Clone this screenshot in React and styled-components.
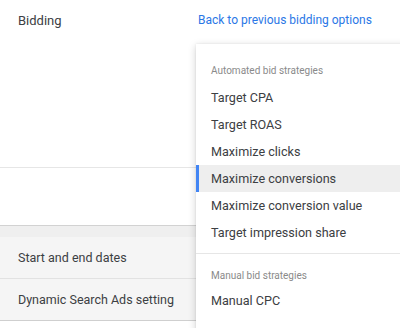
import React from 'react';
import styled, { createGlobalStyle } from 'styled-components';

const automated = [
  'Target CPA',
  'Target ROAS',
  'Maximize clicks',
  'Maximize conversions',
  'Maximize conversion value',
  'Target impression share',
];

const manual = ['Manual CPC'];

const selected = 'Maximize conversions';

const settings = ['Start and end dates', 'Dynamic Search Ads setting'];

function StrategyMenu() {
  return (
    <Menu role="listbox">
      <SectionLabel>Automated bid strategies</SectionLabel>
      {automated.map((name) => (
        <Option key={name} $active={name === selected}>{name}</Option>
      ))}
      <Divider />
      <SectionLabel $compact>Manual bid strategies</SectionLabel>
      {manual.map((name) => (
        <Option key={name} $active={name === selected}>{name}</Option>
      ))}
    </Menu>
  );
}

export default function App() {
  return (
    <>
      <GlobalStyle />
      <Page>
        <BiddingCard>
          <HeaderRow>
            <Title>Bidding</Title>
            <BackLink href="#">Back to previous bidding options</BackLink>
          </HeaderRow>
        </BiddingCard>
        <SettingsList>
          {settings.map((label) => (
            <SettingRow key={label}>{label}</SettingRow>
          ))}
        </SettingsList>
        <StrategyMenu />
      </Page>
    </>
  );
}

const GlobalStyle = createGlobalStyle`
  html, body {
    margin: 0;
    padding: 0;
    background: #fff;
    overflow: hidden;
  }
  body {
    font-family: Roboto, "Liberation Sans", Arial, sans-serif;
    color: #3c4043;
    -webkit-font-smoothing: antialiased;
  }
`;

const Page = styled.div`
  position: relative;
  width: 400px;
  height: 328px;
  overflow: hidden;
`;

const BiddingCard = styled.section`
  height: 167px;
  border-bottom: 1px solid #e6e6e6;
`;

const HeaderRow = styled.div`
  display: grid;
  grid-template-columns: 180px 1fr;
  align-items: center;
  height: 40px;
  padding-left: 18px;
`;

const Title = styled.span`
  font-size: 13px;
  color: #3c4043;
`;

const BackLink = styled.a`
  font-size: 12px;
  color: #2a77e6;
  text-decoration: none;
  white-space: nowrap;
`;

const SettingsList = styled.div`
  margin-top: 57px;
  border-top: 1px solid #d2d2d2;
  border-bottom: 1px solid #cfcfcf;
  padding-top: 11px;
  background: #efefef;
`;

const SettingRow = styled.div`
  display: flex;
  align-items: center;
  height: 41px;
  padding-left: 18px;
  font-size: 12.5px;
  color: #3c4043;
  background: #f5f5f5;
  & + & {
    border-top: 1px solid #e2e2e2;
  }
`;

const Menu = styled.div`
  position: absolute;
  top: 44px;
  left: 196px;
  right: -10px;
  bottom: -20px;
  background: #fff;
  box-shadow: 0 2px 8px rgba(0, 0, 0, 0.18), 0 0 2px rgba(0, 0, 0, 0.08);
`;

const SectionLabel = styled.div`
  padding: ${(p) => (p.$compact ? '14px' : '19px')} 15px ${(p) => (p.$compact ? '3px' : '5px')};
  line-height: 16px;
  font-size: 10px;
  color: #8a8a8a;
`;

const Option = styled.div`
  position: relative;
  display: flex;
  align-items: center;
  height: 27px;
  padding-left: 15px;
  font-size: 12.6px;
  color: #3c4043;
  background: ${(p) => (p.$active ? '#eeeeee' : 'transparent')};
  &::before {
    content: '';
    display: ${(p) => (p.$active ? 'block' : 'none')};
    position: absolute;
    left: 0;
    top: 0;
    bottom: 0;
    width: 3px;
    background: #4285f4;
  }
`;

const Divider = styled.hr`
  margin: 7px 0 0;
  border: 0;
  border-top: 1px solid #e6e6e6;
`;
